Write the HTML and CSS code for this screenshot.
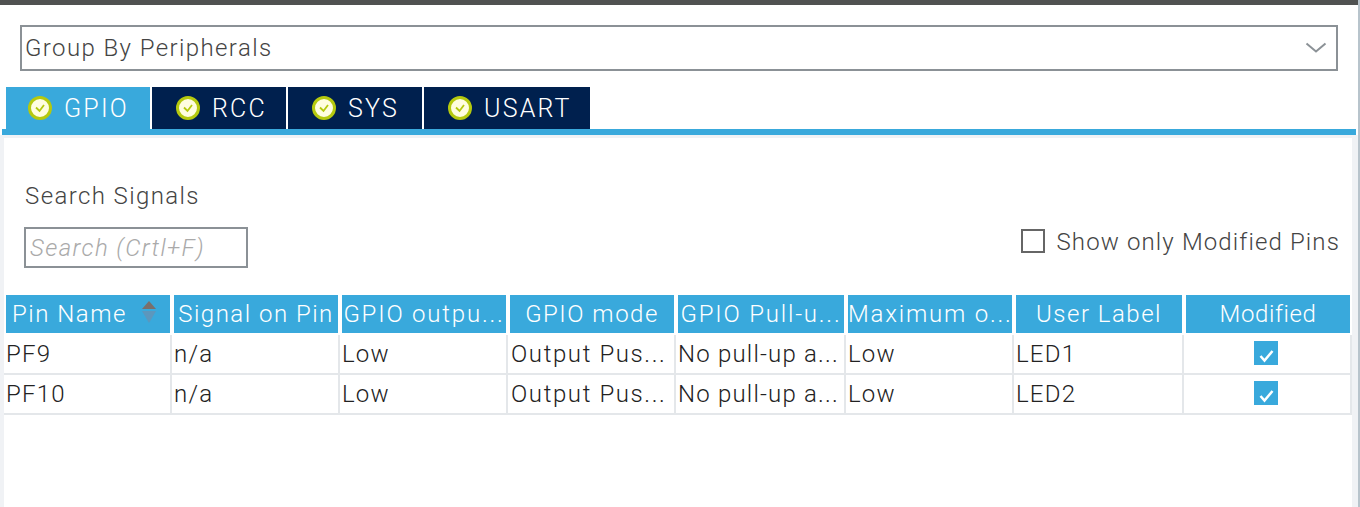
FILE: index.html
```html
<!DOCTYPE html>
<html lang="en">
<head>
  <meta charset="UTF-8">
  <meta name="viewport" content="width=device-width, initial-scale=1.0">
  <title>Pinout Configuration</title>
  <link rel="stylesheet" href="styles.css">
</head>
<body>
  <div class="topbar"></div>

  <div class="page">
    <div class="group-select">
      <span>Group By Peripherals</span>
      <svg class="chevron" width="22" height="12" viewBox="0 0 22 12"><path d="M1.500 1.500 L11 9.500 L20.500 1.500" fill="none" stroke="#8b9196" stroke-width="2"/></svg>
    </div>

    <div class="tabs">
      <div class="tab active"><span class="ok"><svg width="14" height="14" viewBox="0 0 14 14"><path d="M3 6.500 L6.500 10 L11 4" fill="none" stroke="#b5c90e" stroke-width="1.800"/></svg></span>GPIO</div>
      <div class="tab"><span class="ok"><svg width="14" height="14" viewBox="0 0 14 14"><path d="M3 6.500 L6.500 10 L11 4" fill="none" stroke="#b5c90e" stroke-width="1.800"/></svg></span>RCC</div>
      <div class="tab"><span class="ok"><svg width="14" height="14" viewBox="0 0 14 14"><path d="M3 6.500 L6.500 10 L11 4" fill="none" stroke="#b5c90e" stroke-width="1.800"/></svg></span>SYS</div>
      <div class="tab"><span class="ok"><svg width="14" height="14" viewBox="0 0 14 14"><path d="M3 6.500 L6.500 10 L11 4" fill="none" stroke="#b5c90e" stroke-width="1.800"/></svg></span>USART</div>
    </div>
    <div class="tab-line"></div>

    <div class="panel">
      <div class="panel-inner">
        <div class="filters">
          <div class="search">
            <label class="search-label">Search Signals</label>
            <div class="search-box">Search (Crtl+F)</div>
          </div>
          <div class="only-modified"><span class="empty-box"></span>Show only Modified Pins</div>
        </div>

        <div class="pin-table">
          <div class="head first">Pin Name
            <svg class="sort" width="14" height="24" viewBox="0 0 14 24"><path d="M7 0 L14 8 H0 Z" fill="#7a6f6c"/><path d="M0 10 H14 L7 22 Z" fill="#5c97bd"/></svg>
          </div>
          <div class="head">Signal on Pin</div>
          <div class="head cut">GPIO outpu...</div>
          <div class="head">GPIO mode</div>
          <div class="head cut">GPIO Pull-u...</div>
          <div class="head cut">Maximum o...</div>
          <div class="head">User Label</div>
          <div class="head modified">Modified</div>

          <div class="cell">PF9</div>
          <div class="cell">n/a</div>
          <div class="cell">Low</div>
          <div class="cell mode">Output Pus...</div>
          <div class="cell">No pull-up a...</div>
          <div class="cell">Low</div>
          <div class="cell">LED1</div>
          <div class="cell check"><span class="tick"><svg width="24" height="24" viewBox="0 0 24 24"><path d="M6.500 12 L10.500 16.500 L18.500 7" fill="none" stroke="#fff" stroke-width="2.500"/></svg></span></div>

          <div class="cell">PF10</div>
          <div class="cell">n/a</div>
          <div class="cell">Low</div>
          <div class="cell mode">Output Pus...</div>
          <div class="cell">No pull-up a...</div>
          <div class="cell">Low</div>
          <div class="cell">LED2</div>
          <div class="cell check"><span class="tick"><svg width="24" height="24" viewBox="0 0 24 24"><path d="M6.500 12 L10.500 16.500 L18.500 7" fill="none" stroke="#fff" stroke-width="2.500"/></svg></span></div>
        </div>
      </div>
    </div>
  </div>
</body>
</html>
```

FILE: styles.css
```css
* {
  box-sizing: border-box;
}

html, body {
  height: 100%;
}

body {
  margin: 0;
  overflow: hidden;
  background-color: #fff;
  color: #333;
  font-family: 'Roboto', 'Liberation Sans', sans-serif;
  font-size: 24px;
  font-weight: 300;
  letter-spacing: 1.2px;
  display: flex;
  flex-direction: column;
  border-right: 2px solid #b8c4cc;
}

.topbar {
  height: 5px;
  background-color: #505251;
}

.page {
  flex: 1;
  display: flex;
  flex-direction: column;
  padding-top: 20px;
}

.group-select {
  height: 46px;
  margin: 0 20px;
  padding: 0 9px 0 3px;
  border: 2px solid #8b9196;
  display: flex;
  align-items: center;
  justify-content: space-between;
  color: #444;
  letter-spacing: 1.4px;
}

.tabs {
  display: flex;
  gap: 2px;
  margin: 16px 0 0 6px;
  height: 42px;
}

.tab {
  display: flex;
  align-items: center;
  background-color: #00204e;
  color: #fff;
  font-size: 25px;
  letter-spacing: 2.2px;
  padding-left: 24px;
  width: 134px;
}

.tab:last-child {
  width: 166px;
}

.tab.active {
  width: 144px;
  padding-left: 22px;
  background-color: #39a9dc;
}

.ok {
  width: 24px;
  height: 24px;
  margin-right: 12px;
  border-radius: 50%;
  background-color: #fffde0;
  border: 3px solid #b5c90e;
  display: flex;
  align-items: center;
  justify-content: center;
}

.tab-line {
  height: 6px;
  margin: 0 2px;
  background-color: #39a9dc;
}

.panel {
  flex: 1;
  display: flex;
  padding: 3px 6px 0 4px;
  background-color: #f0f2f5;
}

.panel-inner {
  flex: 1;
  background-color: #fff;
}

.filters {
  height: 157px;
  padding: 0 12px 0 20px;
  display: flex;
  justify-content: space-between;
}

.search {
  display: flex;
  flex-direction: column;
  padding-top: 43px;
}

.search-label {
  margin-left: 1px;
  color: #444;
  line-height: 30px;
  letter-spacing: 1.4px;
}

.search-box {
  width: 224px;
  height: 41px;
  margin-top: 16px;
  padding-left: 4px;
  border: 2px solid #8b9196;
  color: #aaa;
  font-style: italic;
  line-height: 39px;
  letter-spacing: 1.4px;
}

.only-modified {
  display: flex;
  align-items: center;
  gap: 11px;
  height: 30px;
  margin-top: 89px;
  color: #444;
  letter-spacing: 1.13px;
}

.empty-box {
  width: 24px;
  height: 24px;
  margin-bottom: 2px;
  border: 2px solid #666;
}

.pin-table {
  display: grid;
  grid-template-columns: 168px 168px 168px 168px 170px 168px 170px 168px;
  grid-auto-rows: 40px;
}

.head {
  height: 38px;
  margin: 0 2px;
  background-color: #39a9dc;
  color: #fff;
  letter-spacing: 1.5px;
  line-height: 38px;
  text-align: center;
  white-space: nowrap;
  overflow: hidden;
  position: relative;
}

.head.first {
  text-align: left;
  padding-left: 6px;
}

.head.cut {
  letter-spacing: 1.8px;
}

.head.modified {
  letter-spacing: 0.6px;
}

.sort {
  position: absolute;
  right: 14px;
  top: 6px;
}

.cell {
  height: 40px;
  padding-left: 2px;
  border-right: 2px solid #e4e7ea;
  border-bottom: 2px solid #e4e7ea;
  color: #222;
  line-height: 38px;
  white-space: nowrap;
}

.cell.mode {
  padding-left: 3px;
  letter-spacing: 1.6px;
}

.check {
  display: flex;
  justify-content: center;
  padding: 6px 2px 0 0;
}

.tick {
  width: 24px;
  height: 24px;
  background-color: #39a9dc;
  display: block;
}
```
